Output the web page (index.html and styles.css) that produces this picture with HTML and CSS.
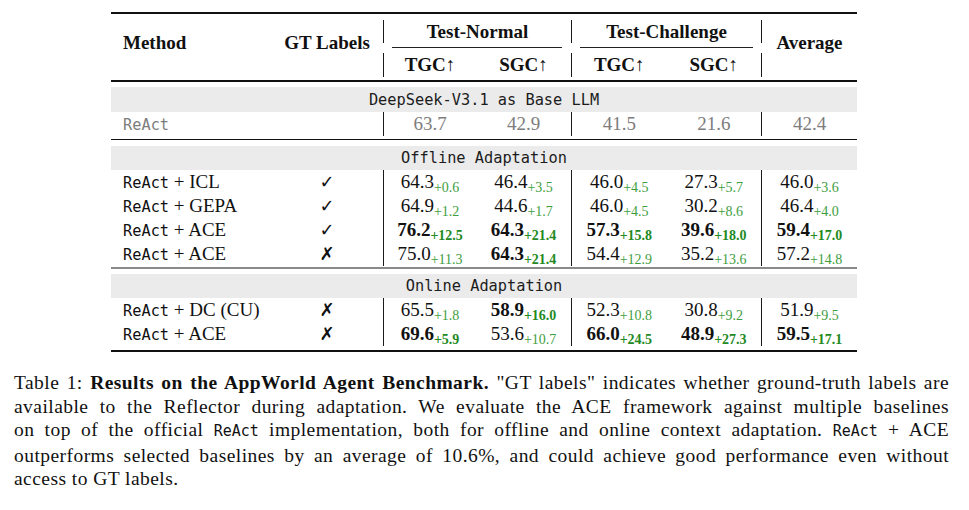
FILE: index.html
```html
<!DOCTYPE html>
<html>
<head>
<meta charset="utf-8">
<title>Table 1</title>
<link rel="stylesheet" href="styles.css">
</head>
<body>
<div class="page">
<table class="res">
<colgroup>
<col class="c-m"><col class="c-gt"><col class="c-n"><col class="c-n2"><col class="c-c"><col class="c-c"><col class="c-a">
</colgroup>
<tbody>
<tr class="rule rule-top"><td colspan="7"><div class="line"></div></td></tr>
<tr class="h1">
  <th rowspan="3" class="hm">Method</th>
  <th rowspan="3" class="hgt">GT Labels</th>
  <th colspan="2" class="bl">Test-Normal</th>
  <th colspan="2" class="bl br">Test-Challenge</th>
  <th rowspan="3" class="havg">Average</th>
</tr>
<tr class="hmid">
  <td colspan="2"><div class="cmid"></div></td>
  <td colspan="2"><div class="cmid"></div></td>
</tr>
<tr class="h2">
  <th class="bl">TGC↑</th><th>SGC↑</th><th class="bl">TGC↑</th><th class="br">SGC↑</th>
</tr>
<tr class="rule rule-head"><td colspan="7"><div class="line"></div></td></tr>

<tr class="band band1"><td colspan="7">DeepSeek-V3.1 as Base LLM</td></tr>
<tr class="row gray">
  <td class="m"><span class="mono">ReAct</span></td><td class="gt"></td>
  <td class="bl">63.7</td><td>42.9</td><td class="bl">41.5</td><td class="br">21.6</td><td>42.4</td>
</tr>
<tr class="rule rule-mid"><td colspan="7"><div class="line"></div></td></tr>

<tr class="band"><td colspan="7">Offline Adaptation</td></tr>
<tr class="row">
  <td class="m"><span class="mono">ReAct</span> + ICL</td><td class="gt ck">✓</td>
  <td class="bl">64.3<span class="d">+0.6</span></td>
  <td>46.4<span class="d">+3.5</span></td>
  <td class="bl">46.0<span class="d">+4.5</span></td>
  <td class="br">27.3<span class="d">+5.7</span></td>
  <td>46.0<span class="d">+3.6</span></td>
</tr>
<tr class="row">
  <td class="m"><span class="mono">ReAct</span> + GEPA</td><td class="gt ck">✓</td>
  <td class="bl">64.9<span class="d">+1.2</span></td>
  <td>44.6<span class="d">+1.7</span></td>
  <td class="bl">46.0<span class="d">+4.5</span></td>
  <td class="br">30.2<span class="d">+8.6</span></td>
  <td>46.4<span class="d">+4.0</span></td>
</tr>
<tr class="row">
  <td class="m"><span class="mono">ReAct</span> + ACE</td><td class="gt ck">✓</td>
  <td class="bl"><b>76.2</b><span class="d db">+12.5</span></td>
  <td><b>64.3</b><span class="d db">+21.4</span></td>
  <td class="bl"><b>57.3</b><span class="d db">+15.8</span></td>
  <td class="br"><b>39.6</b><span class="d db">+18.0</span></td>
  <td><b>59.4</b><span class="d db">+17.0</span></td>
</tr>
<tr class="row">
  <td class="m"><span class="mono">ReAct</span> + ACE</td><td class="gt ck">✗</td>
  <td class="bl">75.0<span class="d">+11.3</span></td>
  <td><b>64.3</b><span class="d db">+21.4</span></td>
  <td class="bl">54.4<span class="d">+12.9</span></td>
  <td class="br">35.2<span class="d">+13.6</span></td>
  <td>57.2<span class="d">+14.8</span></td>
</tr>
<tr class="rule rule-gray"><td colspan="7"><div class="line"></div></td></tr>

<tr class="band"><td colspan="7">Online Adaptation</td></tr>
<tr class="row">
  <td class="m"><span class="mono">ReAct</span> + DC (CU)</td><td class="gt ck">✗</td>
  <td class="bl">65.5<span class="d">+1.8</span></td>
  <td><b>58.9</b><span class="d db">+16.0</span></td>
  <td class="bl">52.3<span class="d">+10.8</span></td>
  <td class="br">30.8<span class="d">+9.2</span></td>
  <td>51.9<span class="d">+9.5</span></td>
</tr>
<tr class="row">
  <td class="m"><span class="mono">ReAct</span> + ACE</td><td class="gt ck">✗</td>
  <td class="bl"><b>69.6</b><span class="d db">+5.9</span></td>
  <td>53.6<span class="d">+10.7</span></td>
  <td class="bl"><b>66.0</b><span class="d db">+24.5</span></td>
  <td class="br"><b>48.9</b><span class="d db">+27.3</span></td>
  <td><b>59.5</b><span class="d db">+17.1</span></td>
</tr>
<tr class="rule rule-bot"><td colspan="7"><div class="line"></div></td></tr>
</tbody>
</table>

<div class="cap">
  <div class="ln">Table 1: <b>Results on the AppWorld Agent Benchmark.</b> "GT labels" indicates whether ground-truth labels are</div>
  <div class="ln">available to the Reflector during adaptation. We evaluate the ACE framework against multiple baselines</div>
  <div class="ln">on top of the official <span class="mono">ReAct</span> implementation, both for offline and online context adaptation. <span class="mono">ReAct</span> + ACE</div>
  <div class="ln">outperforms selected baselines by an average of 10.6%, and could achieve good performance even without</div>
  <div class="ln last">access to GT labels.</div>
</div>
</div>
</body>
</html>
```

FILE: styles.css
```css
html, body {
  margin: 0;
  padding: 0;
  background: #ffffff;
}

body {
  color: #111111;
  font-family: "Liberation Serif", "Times New Roman", serif;
}

.page {
  width: 969px;
  padding-top: 12px;
}

.mono {
  font-family: "DejaVu Sans Mono", "Liberation Mono", monospace;
  font-size: 15.3px;
  letter-spacing: 0;
}

/* ---------- table ---------- */
.res {
  margin-left: 111px;
  width: 746px;
  table-layout: fixed;
  border-collapse: separate;
  border-spacing: 0;
  font-size: 19px;
}

.c-m { width: 160px; }
.c-gt { width: 112px; }
.c-n { width: 93px; }
.c-n2 { width: 95px; }
.c-c { width: 95.5px; }
.c-a { width: 95px; }

.res th,
.res td {
  padding: 0;
  text-align: center;
  white-space: nowrap;
}

.res th {
  font-weight: bold;
}

.bl { border-left: 1px solid #1a1a1a; }
.br { border-right: 1px solid #1a1a1a; }

/* rules */
.rule td { padding: 0; line-height: 0; }
.line { background: #111111; }

.rule-top .line { height: 2px; margin-bottom: 6px; }
.rule-head td { padding-top: 3px; padding-bottom: 5px; }
.rule-head .line { height: 2px; }
.rule-mid td { padding-top: 3px; padding-bottom: 6px; }
.rule-mid .line { height: 1px; }
.rule-gray td { padding-top: 1px; padding-bottom: 5px; }
.rule-gray .line { height: 2px; background: #8a8a8a; }
.rule-bot td { padding-top: 4px; }
.rule-bot .line { height: 2px; }

/* header */
.h1 th { height: 23px; line-height: 18px; }
.hmid td { padding: 4px 0 5px; line-height: 0; }
.cmid { height: 1px; background: #222222; margin: 0 9px; }
.h2 th { height: 24px; line-height: 18px; }

.hm {
  text-align: left !important;
  padding-left: 12px !important;
  padding-bottom: 11px !important;
  vertical-align: middle;
}
.hgt,
.havg {
  padding-bottom: 11px !important;
  vertical-align: middle;
}

/* bands */
.band td {
  height: 24px;
  background: #ebebeb;
  font-family: "DejaVu Sans Mono", "Liberation Mono", monospace;
  font-size: 15.3px;
  color: #1c1c1c;
  line-height: 16px;
}
.band1 td { height: 25px; }

/* data rows */
.row td {
  height: 24px;
  line-height: 16px;
  vertical-align: middle;
}
.row .m {
  text-align: left;
  padding-left: 12px;
}
.gray td { color: #7d7d7d; }

.ck {
  font-family: "DejaVu Sans", sans-serif;
  font-size: 18px;
}

.d {
  font-size: 14px;
  line-height: 0;
  vertical-align: -4px;
  color: #3e9e3e;
}
.db {
  font-weight: bold;
  color: #238a23;
}

/* caption */
.cap {
  margin: 19px 0 0 14px;
  width: 935px;
  font-size: 19.5px;
  line-height: 23.5px;
  letter-spacing: 0.45px;
  color: #111111;
}
.cap .ln {
  text-align: justify;
  text-align-last: justify;
}
.cap .last {
  text-align-last: left;
}
.cap .mono {
  font-size: 15px;
  letter-spacing: 0;
}
```
